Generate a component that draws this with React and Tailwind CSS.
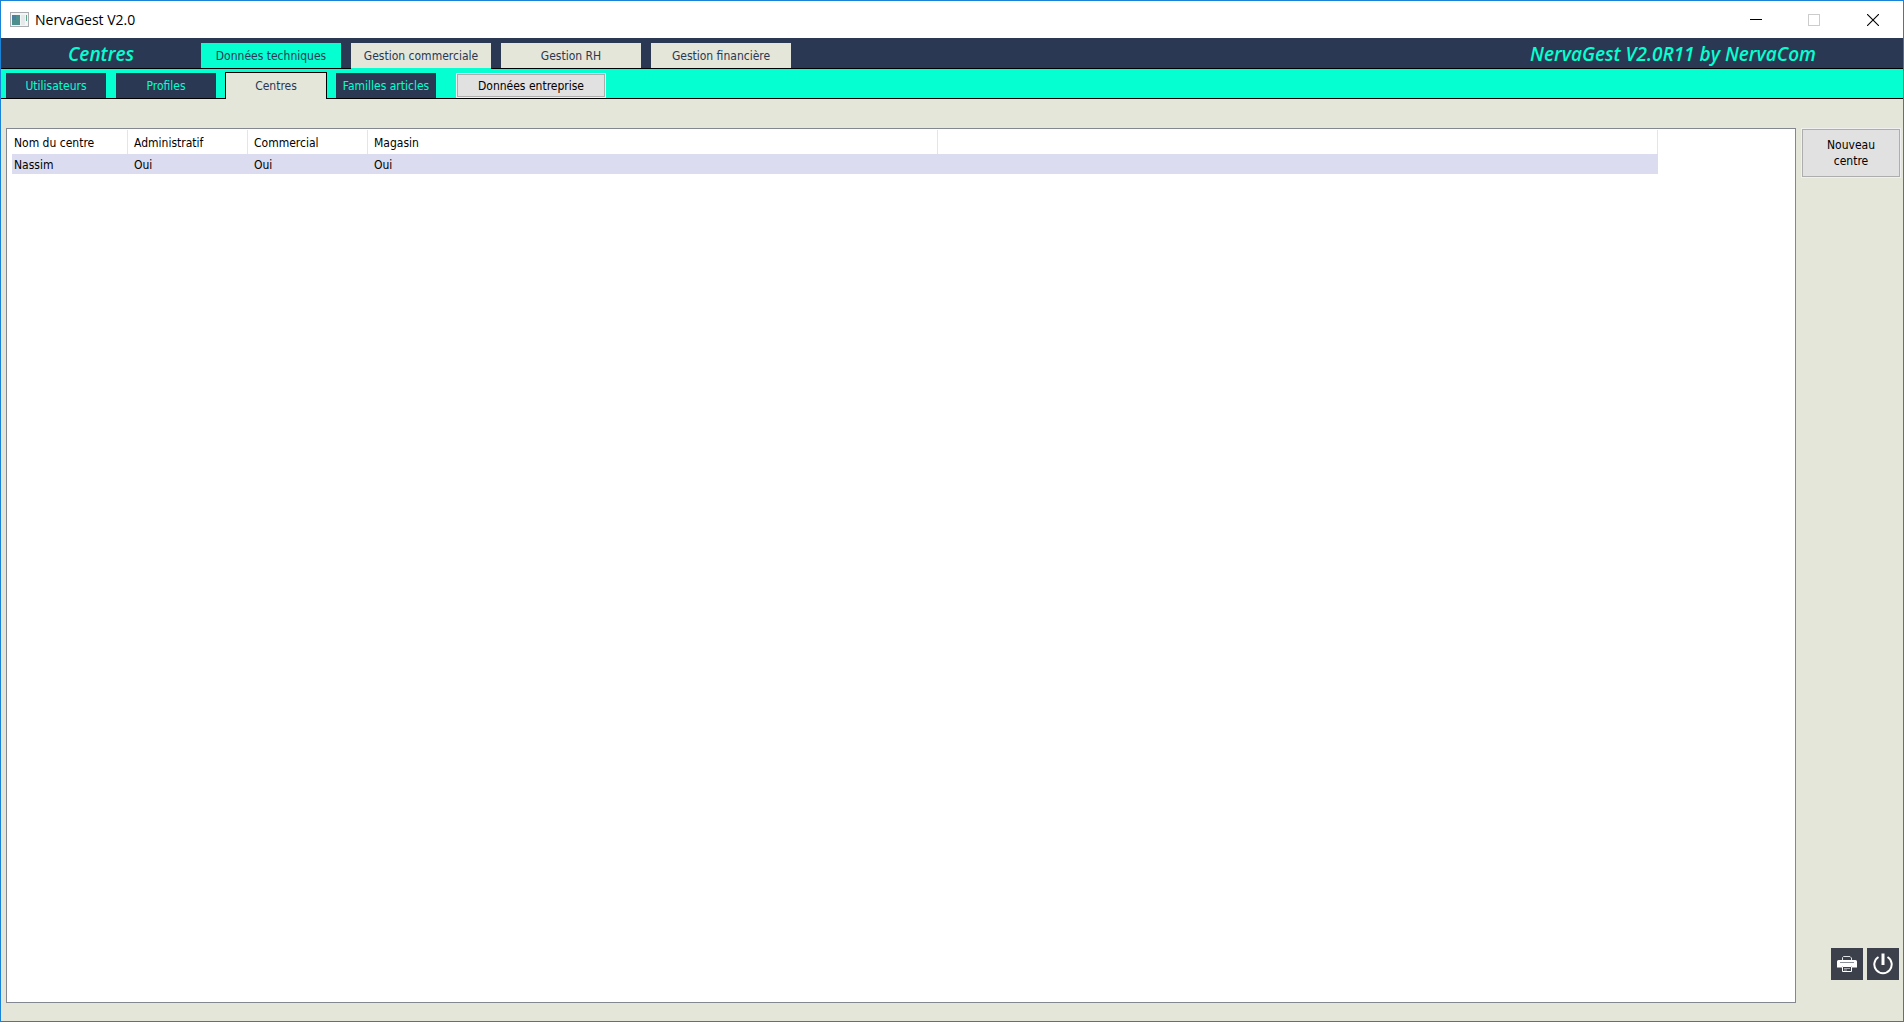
import React, { useState } from "react";
import clsx from "clsx";

const modules = [
  "Données techniques",
  "Gestion commerciale",
  "Gestion RH",
  "Gestion financière",
];

const pages = ["Utilisateurs", "Profiles", "Centres", "Familles articles"];

const centres = [
  { nom: "Nassim", administratif: "Oui", commercial: "Oui", magasin: "Oui" },
];

const TitleBar = () => (
  <header className="flex h-[37px] shrink-0 items-center bg-white pl-[9px] font-['Open_Sans',sans-serif]">
    <svg width="19" height="16" viewBox="0 0 19 16" aria-hidden="true">
      <rect x="0.5" y="0.5" width="18" height="14" fill="#f4f6f6" stroke="#a9adb2" />
      <rect x="2" y="3" width="8" height="10" fill="#4c8f8c" />
      <rect x="2" y="3" width="4" height="5" fill="#4a7f9f" />
      <rect x="11" y="3" width="4" height="10" fill="#e6e9ec" />
      <rect x="16" y="3" width="1" height="6" fill="#5fa58c" />
    </svg>
    <h1 className="ml-1.5 flex-1 text-sm text-black">NervaGest V2.0</h1>
    <button type="button" aria-label="Réduire" className="flex h-full w-[58px] items-center justify-center">
      <svg width="12" height="12" viewBox="0 0 12 12">
        <path d="M0 5.5H12" stroke="#000" />
      </svg>
    </button>
    <button type="button" aria-label="Agrandir" disabled className="flex h-full w-[58px] items-center justify-center">
      <svg width="12" height="12" viewBox="0 0 12 12">
        <rect x="0.5" y="0.5" width="11" height="11" fill="none" stroke="#ccc" />
      </svg>
    </button>
    <button type="button" aria-label="Fermer" className="flex h-full w-[60px] items-center justify-center">
      <svg width="12" height="12" viewBox="0 0 12 12">
        <path d="M0 0L12 12M12 0L0 12" stroke="#000" strokeWidth="1.1" />
      </svg>
    </button>
  </header>
);

const ModuleBar = ({ active, onSelect }) => (
  <nav className="flex h-[31px] shrink-0 items-stretch bg-[#2a3854]">
    <h2 className="flex w-[200px] items-center justify-center border-b border-black pt-1 font-['Segoe_Print','Open_Sans',sans-serif] text-[19px] font-semibold italic text-[#05ffd0]">
      Centres
    </h2>
    {modules.map((label, i) => (
      <div
        key={label}
        className={clsx(
          "flex border-b pt-[5px]",
          i === 1 ? "border-[#05ffd0]" : "border-black"
        )}
      >
        <button
          type="button"
          onClick={() => onSelect(label)}
          className={clsx(
            "w-[140px] text-center text-[#2a3854]",
            active === label ? "bg-[#05ffd0]" : "bg-[#e4e6d9]"
          )}
        >
          {label}
        </button>
        {i !== 1 && <span className="w-[10px]" />}
        {i === 1 && <span className="-mb-px w-[10px] border-b border-black" />}
      </div>
    ))}
    <p className="flex flex-1 items-center justify-end border-b border-black pr-[87px] pt-1 font-['Segoe_Print','Open_Sans',sans-serif] text-[19px] font-semibold italic text-[#05ffd0]">
      NervaGest V2.0R11 by NervaCom
    </p>
  </nav>
);

const PageBar = ({ active, onSelect }) => (
  <nav className="flex h-[30px] shrink-0 bg-[#05ffd0]">
    <div className="w-[5px] border-b border-black" />
    {pages.map((label) => (
      <React.Fragment key={label}>
        {active === label ? (
          <button
            type="button"
            className="-mx-px mt-[3px] w-[102px] border border-b-0 border-black bg-[#e4e6d9] text-[#2a3854]"
          >
            {label}
          </button>
        ) : (
          <div className="flex border-b border-black pt-1">
            <button
              type="button"
              onClick={() => onSelect(label)}
              className="w-[100px] whitespace-nowrap bg-[#2a3854] text-center text-[#05ffd0]"
            >
              {label}
            </button>
          </div>
        )}
        <div className="w-[10px] border-b border-black" />
      </React.Fragment>
    ))}
    <div className="flex flex-1 border-b border-black pl-[10px] pt-1">
      <button type="button" className="w-[150px] border border-[#f0f0f0] text-black">
        <span className="flex h-full items-center justify-center border border-[#adadad] bg-[#e1e1e1]">
          Données entreprise
        </span>
      </button>
    </div>
  </nav>
);

const CentresTable = () => (
  <div className="min-w-0 flex-1 border border-[#828790] bg-white pl-[5px] pt-px">
    <table className="table-fixed border-separate border-spacing-0 text-left text-black">
      <colgroup>
        <col className="w-[116px]" />
        <col className="w-[120px]" />
        <col className="w-[120px]" />
        <col className="w-[570px]" />
        <col className="w-[720px]" />
      </colgroup>
      <thead>
        <tr className="h-6">
          <th className="border-r border-[#e5e5e5] p-0 pl-0.5 pt-0.5 font-normal">Nom du centre</th>
          <th className="border-r border-[#e5e5e5] p-0 pl-1.5 pt-0.5 font-normal">Administratif</th>
          <th className="border-r border-[#e5e5e5] p-0 pl-1.5 pt-0.5 font-normal">Commercial</th>
          <th className="border-r border-[#e5e5e5] p-0 pl-1.5 pt-0.5 font-normal">Magasin</th>
          <th className="border-r border-[#e5e5e5] p-0" />
        </tr>
      </thead>
      <tbody>
        {centres.map((centre) => (
          <tr key={centre.nom} className="h-5 bg-[#dbdcef]">
            <td className="p-0 pl-0.5 pt-0.5">{centre.nom}</td>
            <td className="p-0 pl-1.5 pt-0.5">{centre.administratif}</td>
            <td className="p-0 pl-1.5 pt-0.5">{centre.commercial}</td>
            <td className="p-0 pl-1.5 pt-0.5">{centre.magasin}</td>
            <td className="p-0" />
          </tr>
        ))}
      </tbody>
    </table>
  </div>
);

const SidePanel = () => (
  <aside className="flex w-[100px] shrink-0 flex-col justify-between pb-[23px]">
    <button type="button" className="h-[50px] border border-[#f0f0f0] text-black">
      <span className="flex h-full items-center justify-center border border-[#adadad] bg-[#e1e1e1] px-5">
        Nouveau centre
      </span>
    </button>
    <div className="flex justify-end gap-1 pr-0.5">
      <button type="button" aria-label="Imprimer" className="flex size-8 items-center justify-center bg-[#3b404b]">
        <svg width="20" height="16" viewBox="0 0 20 16">
          <path d="M5.5 5V1.5L6.5 0.5H13L14.5 2V5" fill="none" stroke="#dfe1e4" />
          <path d="M1.5 4H18.5Q20 4 20 5.5V11.5H15V10H5V11.5H0V5.5Q0 4 1.5 4Z" fill="#fff" />
          <path d="M3 6.5H17" stroke="#8b8f97" />
          <path d="M5.5 10.5H14.5V15.5H5.5Z" fill="#3b404b" stroke="#fff" />
          <path d="M7 12.5H13" stroke="#a5a8ae" />
          <path d="M7 14H10" stroke="#a5a8ae" />
        </svg>
      </button>
      <button type="button" aria-label="Quitter" className="flex size-8 items-center justify-center bg-[#3b404b]">
        <svg width="20" height="22" viewBox="0 0 20 22" fill="none" stroke="#fff">
          <path d="M5.5 4A8.7 8.7 0 1 0 14.5 4" strokeWidth="2" />
          <path d="M10 0.5V12" strokeWidth="3" />
        </svg>
      </button>
    </div>
  </aside>
);

const App = () => {
  const [module, setModule] = useState("Données techniques");
  const [page, setPage] = useState("Centres");

  return (
    <div className="flex min-h-screen flex-col border border-[#1883d7] bg-[#e4e6d9] font-['Tahoma','DejaVu_Sans_Condensed','DejaVu_Sans',sans-serif] text-xs">
      <TitleBar />
      <ModuleBar active={module} onSelect={setModule} />
      <PageBar active={page} onSelect={setPage} />
      <main className="flex flex-1 gap-[5px] pb-[18px] pl-[5px] pr-0.5 pt-[29px]">
        <CentresTable />
        <SidePanel />
      </main>
    </div>
  );
};

export default App;
